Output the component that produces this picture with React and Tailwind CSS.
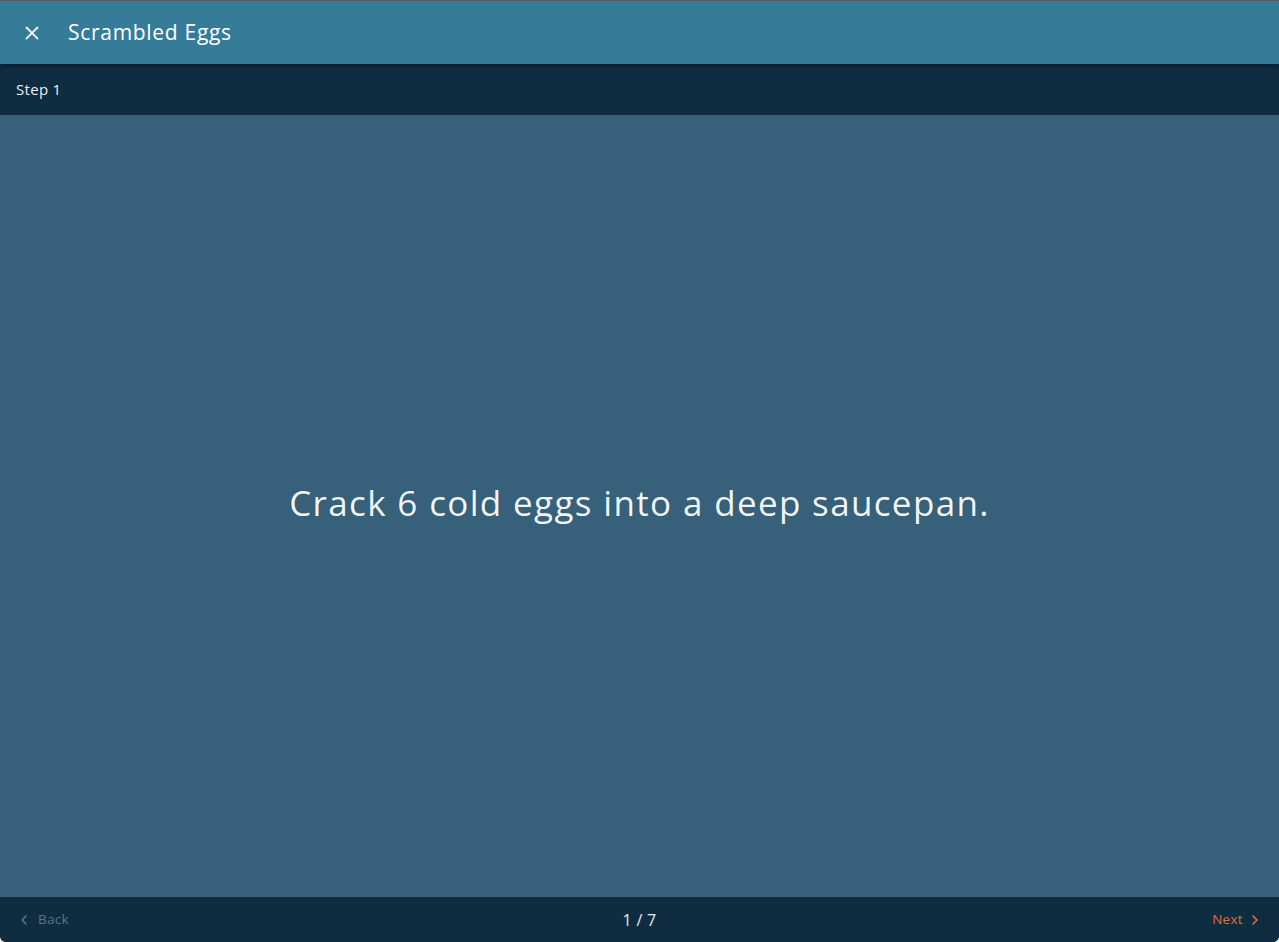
import React from 'react';
import { X, ChevronLeft, ChevronRight } from 'lucide-react';

export default function App() {
  return (
    <div className="flex h-[942px] w-full flex-col overflow-hidden rounded-b-md border-t border-[#5c5c5c] bg-[#37607a] font-['Open_Sans',Inter,sans-serif] text-white">
      {/* header */}
      <header className="relative z-10 flex h-[63px] shrink-0 items-center bg-[#367c99] pl-5 shadow-[0_2px_4px_rgba(0,0,0,0.35)]">
        <button className="flex h-6 w-6 items-center justify-center text-white/90">
          <X className="h-[22px] w-[22px]" strokeWidth={2} />
        </button>
        <h1 className="ml-6 text-[21px] font-medium tracking-[0.7px] text-white">Scrambled Eggs</h1>
      </header>

      {/* step label */}
      <div className="flex h-[51px] shrink-0 items-center bg-[#0f2c40] px-4 text-[15px] tracking-[0.3px] text-white/95">
        Step 1
      </div>

      {/* step body */}
      <main className="flex flex-1 items-center justify-center px-8 pb-[6px]">
        <p className="text-[35px] tracking-[1.35px] text-white/95">Crack 6 cold eggs into a deep saucepan.</p>
      </main>

      {/* footer nav */}
      <footer className="flex h-[45px] shrink-0 items-center justify-between bg-[#0f2c40] px-4 text-[13.5px] tracking-[0.3px]">
        <button className="flex w-24 items-center gap-1.5 text-[#5b7486]">
          <ChevronLeft className="h-4 w-4" strokeWidth={2.5} />
          Back
        </button>
        <span className="text-[16px] text-white/90">1 / 7</span>
        <button className="flex w-24 items-center justify-end gap-1 text-[#e06c4b]">
          Next
          <ChevronRight className="h-4 w-4" strokeWidth={2.5} />
        </button>
      </footer>
    </div>
  );
}
